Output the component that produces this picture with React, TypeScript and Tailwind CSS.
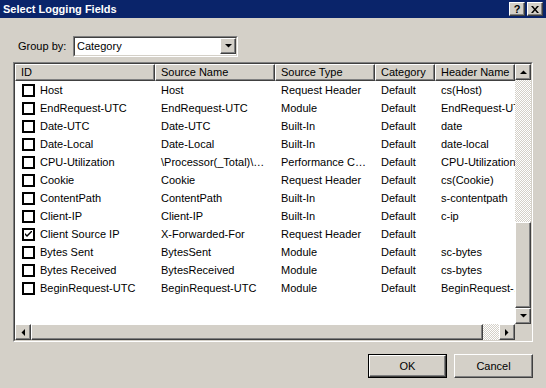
import React from "react";

const rows: [string, string, string, string, string, boolean][] = [
  ["Host", "Host", "Request Header", "Default", "cs(Host)", false],
  ["EndRequest-UTC", "EndRequest-UTC", "Module", "Default", "EndRequest-UTC", false],
  ["Date-UTC", "Date-UTC", "Built-In", "Default", "date", false],
  ["Date-Local", "Date-Local", "Built-In", "Default", "date-local", false],
  ["CPU-Utilization", "\\Processor(_Total)\\…", "Performance C…", "Default", "CPU-Utilization", false],
  ["Cookie", "Cookie", "Request Header", "Default", "cs(Cookie)", false],
  ["ContentPath", "ContentPath", "Built-In", "Default", "s-contentpath", false],
  ["Client-IP", "Client-IP", "Built-In", "Default", "c-ip", false],
  ["Client Source IP", "X-Forwarded-For", "Request Header", "Default", "", true],
  ["Bytes Sent", "BytesSent", "Module", "Default", "sc-bytes", false],
  ["Bytes Received", "BytesReceived", "Module", "Default", "cs-bytes", false],
  ["BeginRequest-UTC", "BeginRequest-UTC", "Module", "Default", "BeginRequest-…", false],
];

const raised =
  "border border-t-white border-l-white border-b-[#404040] border-r-[#404040] shadow-[inset_-1px_-1px_0_#808080,inset_1px_1px_0_#d4d0c8]";

function Arrow({ dir }: { dir: "up" | "down" | "left" | "right" }) {
  const pts: Record<string, string> = {
    up: "0,4 7,4 3.5,0.5",
    down: "0,0 7,0 3.5,3.5",
    left: "4,0 4,7 0.5,3.5",
    right: "0,0 0,7 3.5,3.5",
  };
  const w = dir === "up" || dir === "down" ? 7 : 4;
  const h = dir === "up" || dir === "down" ? 4 : 7;
  return (
    <svg width={w} height={h} viewBox={`0 0 ${w} ${h}`}>
      <polygon points={pts[dir]} fill="#000" />
    </svg>
  );
}

function SBtn({ dir }: { dir: "up" | "down" | "left" | "right" }) {
  return (
    <div className={`w-[16px] h-[16px] bg-[#d4d0c8] flex items-center justify-center ${raised}`}>
      <Arrow dir={dir} />
    </div>
  );
}

const checker = {
  backgroundImage:
    "repeating-conic-gradient(#ffffff 0% 25%, #d4d0c8 0% 50%)",
  backgroundSize: "2px 2px",
};

function Check({ on }: { on: boolean }) {
  return (
    <div className="w-[13px] h-[13px] border-2 border-black bg-white flex items-center justify-center shrink-0">
      {on && (
        <svg width="7" height="7" viewBox="0 0 7 7">
          <path d="M0 2 L0 4 L2 6 L7 1 L7 -1 L2 4 Z" fill="#000" />
        </svg>
      )}
    </div>
  );
}

const cols = [140, 120, 100, 60, 80];
const heads = ["ID", "Source Name", "Source Type", "Category", "Header Name"];

export default function App() {
  return (
    <div
      className="w-[546px] h-[388px] bg-[#d4d0c8] flex flex-col text-[11px] text-black overflow-hidden"
      style={{ fontFamily: '"Liberation Sans", Arial, sans-serif' }}
    >
      <div className="h-[18px] bg-[#0a246a] flex items-center justify-between pl-[3px] pr-[3px]">
        <span className="text-white font-bold text-[11px] leading-none">Select Logging Fields</span>
        <div className="flex gap-[2px]">
          <div className={`w-[16px] h-[14px] bg-[#d4d0c8] flex items-center justify-center font-bold text-[11px] leading-none ${raised}`}>?</div>
          <div className={`w-[16px] h-[14px] bg-[#d4d0c8] flex items-center justify-center ${raised}`}>
            <svg width="8" height="7" viewBox="0 0 8 7">
              <path d="M0 0h2l2 2.5L6 0h2L5 3.5 8 7H6L4 4.5 2 7H0l3-3.5z" fill="#000" />
            </svg>
          </div>
        </div>
      </div>

      <div className="flex items-center mt-[18px] ml-[18px] h-[20px]">
        <span className="w-[55px]">Group by:</span>
        <div className="w-[165px] h-[21px] border border-t-[#808080] border-l-[#808080] border-b-white border-r-white">
          <div className="w-full h-full border border-t-[#404040] border-l-[#404040] border-b-[#d4d0c8] border-r-[#d4d0c8] bg-white flex items-center">
            <span className="flex-1 pl-[2px]">Category</span>
            <SBtn dir="down" />
          </div>
        </div>
      </div>

      <div className="ml-[13px] mt-[6px] w-[520px] h-[280px] border border-t-[#808080] border-l-[#808080] border-b-white border-r-white">
        <div className="w-full h-full border border-t-[#404040] border-l-[#404040] border-b-[#d4d0c8] border-r-[#d4d0c8] bg-white flex flex-col">
          <div className="flex flex-1 min-h-0">
            <div className="w-[500px] flex flex-col overflow-hidden">
              <div className="flex h-[17px] shrink-0">
                {heads.map((h, i) => (
                  <div
                    key={h}
                    style={{ width: cols[i] }}
                    className={`h-[17px] bg-[#d4d0c8] pl-[5px] flex items-center whitespace-nowrap overflow-hidden shrink-0 ${raised}`}
                  >
                    {h}
                  </div>
                ))}
              </div>
              <div className="flex flex-col">
                {rows.map((r) => (
                  <div key={r[0]} className="flex h-[18px] items-center">
                    <div style={{ width: cols[0] }} className="flex items-center pl-[7px] gap-[5px] shrink-0">
                      <Check on={r[5]} />
                      <span className="whitespace-nowrap">{r[0]}</span>
                    </div>
                    {[r[1], r[2], r[3], r[4]].map((t, i) => (
                      <div
                        key={i}
                        style={{ width: cols[i + 1] }}
                        className="pl-[6px] whitespace-nowrap overflow-hidden shrink-0"
                      >
                        {t}
                      </div>
                    ))}
                  </div>
                ))}
              </div>
            </div>
            <div className="w-[16px] flex flex-col">
              <SBtn dir="up" />
              <div className="flex-1 flex flex-col" style={checker}>
                <div className="flex-1" />
                <div className={`h-[86px] bg-[#d4d0c8] ${raised}`} />
              </div>
              <SBtn dir="down" />
            </div>
          </div>
          <div className="flex h-[16px] shrink-0">
            <SBtn dir="left" />
            <div className="flex-1 flex" style={checker}>
              <div className={`w-[452px] bg-[#d4d0c8] ${raised}`} />
            </div>
            <SBtn dir="right" />
            <div className="w-[16px] bg-[#d4d0c8]" />
          </div>
        </div>
      </div>

      <div className="flex justify-end gap-[7px] mt-[12px] mr-[13px]">
        <div className="w-[79px] h-[24px] border border-black">
          <div className={`w-full h-full bg-[#d4d0c8] flex items-center justify-center ${raised}`}>OK</div>
        </div>
        <div className={`w-[79px] h-[24px] bg-[#d4d0c8] flex items-center justify-center ${raised}`}>Cancel</div>
      </div>
    </div>
  );
}
